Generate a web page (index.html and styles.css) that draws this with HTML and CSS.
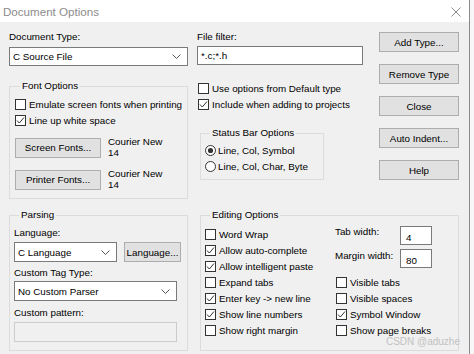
FILE: index.html
```html
<!DOCTYPE html>
<html>
<head>
<meta charset="utf-8">
<link rel="stylesheet" href="styles.css">
</head>
<body>
<div class="window">
  <div class="titlebar">
    <span class="title">Document Options</span>
    <svg class="close" width="10" height="10" viewBox="0 0 10 10"><path d="M0.5 0.5 L9.5 9.5 M9.5 0.5 L0.5 9.5" stroke="#8a8a8a" stroke-width="1" fill="none"/></svg>
  </div>
  <div class="body">
    <div class="top">
      <div class="col1">
        <div class="label">Document Type:</div>
        <div class="combo doc-combo"><span>C Source File</span><svg class="chev" width="9" height="5" viewBox="0 0 9 5"><path d="M0.5 0.5 L4.5 4.5 L8.5 0.5" stroke="#555" fill="none"/></svg></div>
        <fieldset class="group font-group">
          <legend>Font Options</legend>
          <div class="check"><svg class="box" width="11" height="11" viewBox="0 0 11 11"><rect x="0.5" y="0.5" width="10" height="10" fill="#fff" stroke="#333"/></svg><span>Emulate screen fonts when printing</span></div>
          <div class="check"><svg class="box" width="11" height="11" viewBox="0 0 11 11"><rect x="0.5" y="0.5" width="10" height="10" fill="#fff" stroke="#333"/><path d="M2 5.5 L4.3 8 L9 2.5" stroke="#333" fill="none"/></svg><span>Line up white space</span></div>
          <div class="font-row">
            <div class="btn font-btn">Screen Fonts...</div>
            <div class="font-name">Courier New<br>14</div>
          </div>
          <div class="font-row second">
            <div class="btn font-btn">Printer Fonts...</div>
            <div class="font-name">Courier New<br>14</div>
          </div>
        </fieldset>
      </div>
      <div class="col2">
        <div class="label">File filter:</div>
        <div class="textbox filter">*.c;*.h</div>
        <div class="checks">
          <div class="check"><svg class="box" width="11" height="11" viewBox="0 0 11 11"><rect x="0.5" y="0.5" width="10" height="10" fill="#fff" stroke="#333"/></svg><span>Use options from Default type</span></div>
          <div class="check"><svg class="box" width="11" height="11" viewBox="0 0 11 11"><rect x="0.5" y="0.5" width="10" height="10" fill="#fff" stroke="#333"/><path d="M2 5.5 L4.3 8 L9 2.5" stroke="#333" fill="none"/></svg><span>Include when adding to projects</span></div>
        </div>
        <fieldset class="group status-group">
          <legend>Status Bar Options</legend>
          <div class="radio"><svg width="11" height="11" viewBox="0 0 11 11"><circle cx="5.5" cy="5.5" r="5" fill="#fff" stroke="#333"/><circle cx="5.5" cy="5.5" r="2.6" fill="#333"/></svg><span>Line, Col, Symbol</span></div>
          <div class="radio"><svg width="11" height="11" viewBox="0 0 11 11"><circle cx="5.5" cy="5.5" r="5" fill="#fff" stroke="#333"/></svg><span>Line, Col, Char, Byte</span></div>
        </fieldset>
      </div>
      <div class="col3">
        <div class="btn">Add Type...</div>
        <div class="btn">Remove Type</div>
        <div class="btn">Close</div>
        <div class="btn">Auto Indent...</div>
        <div class="btn">Help</div>
      </div>
    </div>
    <div class="bottom">
      <fieldset class="group parsing-group">
        <legend>Parsing</legend>
        <div class="label">Language:</div>
        <div class="lang-row">
          <div class="combo lang-combo"><span>C Language</span><svg class="chev" width="9" height="5" viewBox="0 0 9 5"><path d="M0.5 0.5 L4.5 4.5 L8.5 0.5" stroke="#555" fill="none"/></svg></div>
          <div class="btn lang-btn">Language...</div>
        </div>
        <div class="label tag-label">Custom Tag Type:</div>
        <div class="combo parser-combo"><span>No Custom Parser</span><svg class="chev" width="9" height="5" viewBox="0 0 9 5"><path d="M0.5 0.5 L4.5 4.5 L8.5 0.5" stroke="#555" fill="none"/></svg></div>
        <div class="label pattern-label">Custom pattern:</div>
        <div class="textbox disabled"></div>
      </fieldset>
      <fieldset class="group editing-group">
        <legend>Editing Options</legend>
        <div class="edit-grid">
          <div class="edit-left">
            <div class="check"><svg class="box" width="11" height="11" viewBox="0 0 11 11"><rect x="0.5" y="0.5" width="10" height="10" fill="#fff" stroke="#333"/></svg><span>Word Wrap</span></div>
            <div class="check"><svg class="box" width="11" height="11" viewBox="0 0 11 11"><rect x="0.5" y="0.5" width="10" height="10" fill="#fff" stroke="#333"/><path d="M2 5.5 L4.3 8 L9 2.5" stroke="#333" fill="none"/></svg><span>Allow auto-complete</span></div>
            <div class="check"><svg class="box" width="11" height="11" viewBox="0 0 11 11"><rect x="0.5" y="0.5" width="10" height="10" fill="#fff" stroke="#333"/><path d="M2 5.5 L4.3 8 L9 2.5" stroke="#333" fill="none"/></svg><span>Allow intelligent paste</span></div>
            <div class="check"><svg class="box" width="11" height="11" viewBox="0 0 11 11"><rect x="0.5" y="0.5" width="10" height="10" fill="#fff" stroke="#333"/></svg><span>Expand tabs</span></div>
            <div class="check"><svg class="box" width="11" height="11" viewBox="0 0 11 11"><rect x="0.5" y="0.5" width="10" height="10" fill="#fff" stroke="#333"/><path d="M2 5.5 L4.3 8 L9 2.5" stroke="#333" fill="none"/></svg><span>Enter key -&gt; new line</span></div>
            <div class="check"><svg class="box" width="11" height="11" viewBox="0 0 11 11"><rect x="0.5" y="0.5" width="10" height="10" fill="#fff" stroke="#333"/><path d="M2 5.5 L4.3 8 L9 2.5" stroke="#333" fill="none"/></svg><span>Show line numbers</span></div>
            <div class="check"><svg class="box" width="11" height="11" viewBox="0 0 11 11"><rect x="0.5" y="0.5" width="10" height="10" fill="#fff" stroke="#333"/></svg><span>Show right margin</span></div>
          </div>
          <div class="edit-right">
            <div class="widths">
              <div class="width-row"><span class="width-label">Tab width:</span><div class="textbox num">4</div></div>
              <div class="width-row"><span class="width-label">Margin width:</span><div class="textbox num">80</div></div>
            </div>
            <div class="check"><svg class="box" width="11" height="11" viewBox="0 0 11 11"><rect x="0.5" y="0.5" width="10" height="10" fill="#fff" stroke="#333"/></svg><span>Visible tabs</span></div>
            <div class="check"><svg class="box" width="11" height="11" viewBox="0 0 11 11"><rect x="0.5" y="0.5" width="10" height="10" fill="#fff" stroke="#333"/></svg><span>Visible spaces</span></div>
            <div class="check"><svg class="box" width="11" height="11" viewBox="0 0 11 11"><rect x="0.5" y="0.5" width="10" height="10" fill="#fff" stroke="#333"/><path d="M2 5.5 L4.3 8 L9 2.5" stroke="#333" fill="none"/></svg><span>Symbol Window</span></div>
            <div class="check"><svg class="box" width="11" height="11" viewBox="0 0 11 11"><rect x="0.5" y="0.5" width="10" height="10" fill="#fff" stroke="#333"/></svg><span>Show page breaks</span></div>
          </div>
        </div>
      </fieldset>
    </div>
    <span class="watermark">CSDN @aduzhe</span>
  </div>
</div>
</body>
</html>
```

FILE: styles.css
```css
html, body {
  margin: 0;
  padding: 0;
  background: #f7f7f7;
}
body {
  font-family: "Liberation Sans", Arial, sans-serif;
  font-size: 9.8px;
  color: #000;
}
.window {
  width: 469px;
  height: 354px;
  display: flex;
  flex-direction: column;
  border-right: 1px solid #8a8a8a;
}
.titlebar {
  height: 22px;
  background: #fff;
  display: flex;
  align-items: center;
  justify-content: space-between;
  padding: 0 8px 0 3px;
}
.title {
  font-size: 11.6px;
  color: #8c8c8c;
  padding-top: 1px;
}
.close {
  display: block;
  margin-top: 2px;
}
.body {
  flex: 1;
  background: #f0f0f0;
  position: relative;
}
.top {
  display: flex;
  padding: 8px 0 0 9px;
}
.label {
  line-height: 14px;
  height: 14px;
  white-space: nowrap;
}
.col1 {
  width: 179px;
  display: flex;
  flex-direction: column;
}
.combo {
  box-sizing: border-box;
  background: #fff;
  border: 1px solid #7a7a7a;
  display: flex;
  align-items: center;
  justify-content: space-between;
  padding: 0 6px 0 3px;
  white-space: nowrap;
}
.chev {
  display: block;
}
.doc-combo {
  height: 19px;
  margin-top: 3px;
}
.group {
  margin: 0;
  border: 1px solid #dcdcdc;
  min-width: 0;
  box-sizing: border-box;
}
.group legend {
  padding: 0 2px;
  margin-left: 5px;
  line-height: 14px;
}
.font-group {
  margin-top: 13px;
  padding: 3px 4px 8px 5px;
}
.check, .radio {
  display: flex;
  align-items: center;
  height: 16px;
  gap: 3px;
  white-space: nowrap;
}
.radio {
  gap: 2px;
}
.check svg, .radio svg {
  display: block;
  flex: none;
}
.font-row {
  display: flex;
  align-items: center;
  margin-top: 9px;
  gap: 7px;
}
.font-row.second {
  margin-top: 11px;
}
.btn {
  box-sizing: border-box;
  height: 20px;
  background: #e1e1e1;
  border: 1px solid #adadad;
  display: flex;
  align-items: center;
  justify-content: center;
  white-space: nowrap;
}
.font-btn {
  width: 86px;
}
.font-name {
  line-height: 11px;
  margin-top: -1px;
}
.col2 {
  width: 166px;
  margin-left: 9px;
  display: flex;
  flex-direction: column;
}
.textbox {
  box-sizing: border-box;
  background: #fff;
  border: 1px solid #7a7a7a;
  padding-left: 3px;
  display: flex;
  align-items: center;
}
.filter {
  height: 19px;
  margin-top: 2px;
}
.checks {
  margin-top: 15px;
  padding-left: 1px;
}
.status-group {
  width: 124px;
  margin-top: 14px;
  margin-left: 3px;
  padding: 2px 4px 5px 4px;
}
.col3 {
  width: 80px;
  margin-left: 16px;
  padding-top: 2px;
  display: flex;
  flex-direction: column;
  gap: 12px;
}
.bottom {
  display: flex;
  padding-left: 9px;
  margin-top: 9px;
}
.parsing-group {
  width: 179px;
  padding: 4px 4px 8px 4px;
}
.lang-row {
  display: flex;
  align-items: center;
  gap: 7px;
  margin-top: 2px;
}
.lang-combo {
  width: 103px;
  height: 20px;
}
.lang-btn {
  width: 57px;
}
.tag-label {
  margin-top: 4px;
}
.parser-combo {
  width: 163px;
  height: 20px;
  margin-top: 1px;
}
.pattern-label {
  margin-top: 5px;
}
.textbox.disabled {
  width: 163px;
  height: 20px;
  margin-top: 2px;
  background: #f0f0f0;
  border-color: #cccccc;
}
.editing-group {
  width: 259px;
  margin-left: 12px;
  padding: 4px 4px 8px 4px;
}
.edit-grid {
  display: grid;
  grid-template-columns: 130px 1fr;
}
.widths {
  height: 48px;
  display: flex;
  flex-direction: column;
  gap: 4px;
}
.width-row {
  display: flex;
  align-items: center;
}
.width-label {
  width: 65px;
  white-space: nowrap;
  margin-top: -8px;
}
.width-row + .width-row .width-label {
  margin-top: -6px;
}
.num {
  width: 32px;
  height: 19px;
  padding-left: 5px;
  padding-top: 3px;
}
.edit-right .check {
  padding-left: 1px;
}
.watermark {
  position: absolute;
  right: 9px;
  top: 313px;
  color: #c2c2c2;
  font-size: 10px;
  line-height: 14px;
  white-space: nowrap;
}
```
